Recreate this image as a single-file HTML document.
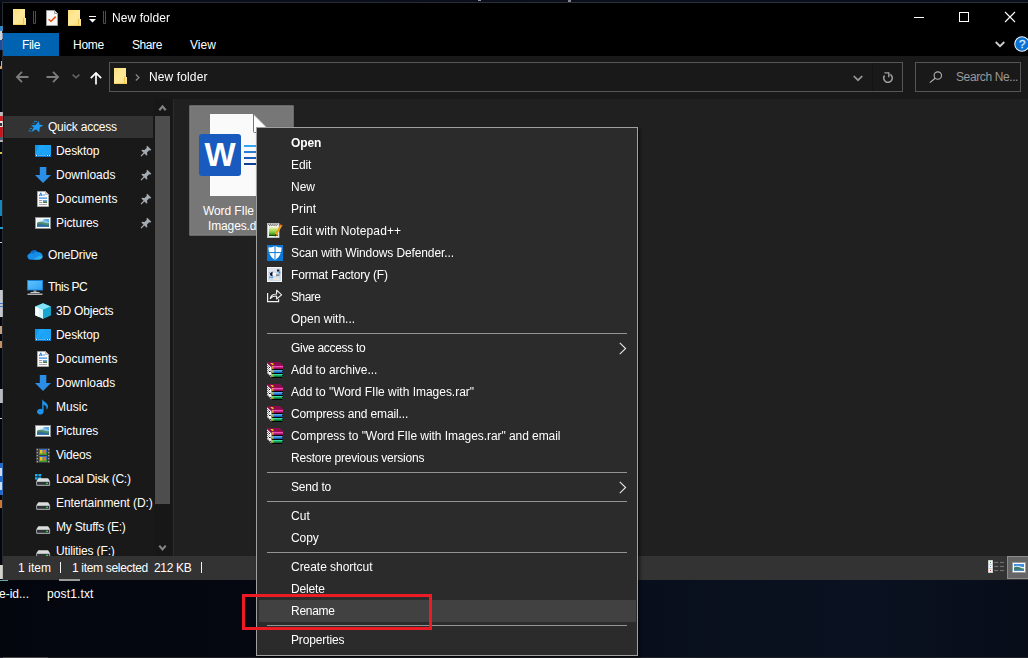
<!DOCTYPE html>
<html><head><meta charset="utf-8"><title>New folder</title>
<style>
*{box-sizing:border-box;margin:0;padding:0}
html,body{width:1028px;height:658px;overflow:hidden;background:#05070f}
body{background:linear-gradient(90deg,#04060e 0%,#050812 30%,#09101e 70%,#0a1221 85%,#070c18 100%)}
body{position:relative;font-family:"Liberation Sans",sans-serif;font-size:12px;color:#fff}
.abs,svg{position:absolute}
svg{overflow:visible}
.t{position:absolute;white-space:nowrap;line-height:16px;height:16px;color:#fff;transform-origin:0 50%}
#win{left:2px;top:2px;width:1026px;height:578px;background:#191919;background-clip:padding-box;border-left:1px solid rgba(120,122,130,.3);border-top:1px solid rgba(120,122,130,.3)}
#title{left:3px;top:3px;width:1025px;height:30px;background:#000}
#ribbon{left:3px;top:33px;width:1025px;height:23px;background:#000}
#filetab{left:3px;top:33px;width:56px;height:23px;background:#0063b1}
#addr{left:109px;top:62px;width:794px;height:30px;border:1px solid #555;background:#191919}
#search{left:915px;top:62px;width:106px;height:30px;border:1px solid #555;background:#191919}
#nav{left:3px;top:99px;width:151px;height:457px;background:#191919}
#track{left:154px;top:99px;width:18px;height:457px;background:#171717}
#thumb{left:155px;top:116px;width:15px;height:388px;background:#4d4d4d}
#split{left:173px;top:99px;width:1px;height:457px;background:#2b2b2b}
#content{left:174px;top:99px;width:854px;height:457px;background:#202020}
#qa{left:4px;top:116px;width:149px;height:22px;background:#333}
#status{left:3px;top:556px;width:1025px;height:24px;background:#333}
#menu{left:256px;top:127px;width:382px;height:529px;background:#2b2b2b;border:1px solid #a0a0a0;box-shadow:2px 2px 3px rgba(0,0,0,.55)}
#hl{left:259px;top:600px;width:377px;height:22px;background:#414141}
#red{left:242px;top:594px;width:190px;height:36px;border:3px solid #ed1c24}
.sep{position:absolute;left:267px;width:360px;height:1px;background:#949494}
.m{left:291px;will-change:transform}
.gs{will-change:transform}
.n{left:56px}
.g{color:#9a9a9a}
</style></head><body>

<!-- DESKTOP BITS -->
<div class="abs" style="left:0;top:26px;width:3px;height:5px;background:#2a88cc"></div>
<div class="abs" style="left:0;top:31px;width:2px;height:9px;background:#ccd2d8"></div>
<div class="abs" style="left:2px;top:33px;width:1px;height:6px;background:#8aa4c4"></div>
<div class="abs" style="left:0;top:40px;width:3px;height:10px;background:#1c4e9c"></div>
<div class="abs" style="left:1px;top:61px;width:1px;height:6px;background:#b8b4b0"></div>
<div class="abs" style="left:0;top:66px;width:2px;height:3px;background:#d8a060"></div>
<div class="abs" style="left:0;top:112px;width:3px;height:4px;background:#bcbcbc"></div>
<div class="abs" style="left:0;top:116px;width:3px;height:5px;background:#d8181c"></div>
<div class="abs" style="left:0;top:121px;width:3px;height:6px;background:#ececec"></div>
<div class="abs" style="left:0;top:123px;width:2px;height:3px;background:#3a3030"></div>
<div class="abs" style="left:0;top:127px;width:3px;height:10px;background:#cc1418"></div>
<div class="abs" style="left:0;top:137px;width:3px;height:3px;background:#4a5a70"></div>
<div class="abs" style="left:0;top:140px;width:3px;height:2px;background:#b4b4b4"></div>
<div class="abs" style="left:0;top:152px;width:2px;height:2px;background:#d8c040"></div>
<div class="abs" style="left:0;top:200px;width:2px;height:16px;background:#1488b8"></div>
<div class="abs" style="left:0;top:227px;width:3px;height:2px;background:#18a0d0"></div>
<div class="abs" style="left:0;top:242px;width:2px;height:1px;background:#ccc"></div>
<div class="abs" style="left:0;top:290px;width:3px;height:27px;background:#c4c8cc"></div>
<div class="abs" style="left:0;top:303px;width:3px;height:1px;background:#3a78d0"></div>
<div class="abs" style="left:0;top:306px;width:3px;height:1px;background:#3a78d0"></div>
<div class="abs" style="left:0;top:326px;width:2px;height:8px;background:#c8a080"></div>
<div class="abs" style="left:0;top:341px;width:2px;height:7px;background:#c89060"></div>
<div class="abs" style="left:0;top:389px;width:3px;height:14px;background:#b8bcc0"></div>
<div class="abs" style="left:0;top:418px;width:2px;height:1px;background:#ccc"></div>
<div class="abs" style="left:0;top:463px;width:3px;height:32px;background:#1c6ad0"></div>
<div class="abs" style="left:0;top:468px;width:2px;height:8px;background:#d0dcec"></div>
<div class="abs" style="left:0;top:482px;width:2px;height:8px;background:#d0dcec"></div>
<div class="abs" style="left:0;top:500px;width:2px;height:8px;background:#c87830"></div>
<div class="abs" style="left:0;top:565px;width:3px;height:14px;background:#d4d4cc"></div>
<div class="abs" style="left:0;top:0;width:1028px;height:2px;background:#0b0f1b"></div>
<div class="abs" style="left:478px;top:0;width:3px;height:1px;background:#999"></div>
<div class="abs" style="left:568px;top:0;width:3px;height:2px;background:#888"></div>
<div class="abs" style="left:0;top:657px;width:1028px;height:1px;background:#1e2026"></div>
<div class="abs" style="left:3px;top:657px;width:45px;height:1px;background:#484848"></div>
<div class="abs" id="win"></div>
<div class="abs" id="title"></div>
<div class="abs" id="ribbon"></div>
<div class="abs" id="filetab"></div>
<div class="abs" id="addr"></div>
<div class="abs" id="search"></div>
<div class="abs" id="nav"></div>
<div class="abs" id="track"></div>
<div class="abs" id="thumb"></div>
<div class="abs" id="split"></div>
<div class="abs" id="content"></div>
<div class="abs" id="qa"></div>
<div class="abs" id="status"></div>

<!-- TITLE TEXT -->
<div class="t gs" style="left:112px;top:10px;letter-spacing:0.08px">New folder</div>
<div class="t" style="left:22px;top:37px;letter-spacing:-0.34px">File</div>
<div class="t" style="left:73px;top:37px;letter-spacing:-0.25px">Home</div>
<div class="t" style="left:132px;top:37px;letter-spacing:-0.41px">Share</div>
<div class="t" style="left:190px;top:37px;letter-spacing:0.05px">View</div>
<div class="t gs" style="left:149px;top:69px;letter-spacing:0.12px">New folder</div>
<div class="t g" style="left:956px;top:69px;letter-spacing:-0.39px">Search Ne...</div>


<!-- TITLE ICONS -->
<svg style="left:13px;top:9px" width="13" height="16" viewBox="0 0 13 16"><defs><linearGradient id="fg" x1="0" y1="0" x2="1" y2="1"><stop offset="0" stop-color="#ffe07a"/><stop offset=".5" stop-color="#ffe999"/><stop offset="1" stop-color="#ffdf7d"/></linearGradient></defs><rect x="0" y="0" width="12" height="16" fill="url(#fg)"/><rect x="10" y="9" width="3" height="7" fill="#ffe38a"/><rect x="10" y="9" width="1" height="7" fill="#e9c558"/><rect x="0" y="15" width="13" height="1" fill="#f2cf5e"/></svg>
<svg style="left:33px;top:11px" width="3" height="13" viewBox="0 0 3 13"><path d="M.5 0V12.5H2.5V0" fill="none" stroke="#4f4f4f" stroke-width="1"/></svg>
<svg style="left:46px;top:10px" width="12" height="16" viewBox="0 0 12 16"><path d="M.5.5H8.5L11.5 3.5V15.5H.5Z" fill="#f7f7f7" stroke="#9d9d9d"/><path d="M8.5.5V3.5H11.5" fill="#e4e4e4" stroke="#9d9d9d"/><path d="M2.6 9.2L5 11.3L9.7 6.6" fill="none" stroke="#f04e12" stroke-width="1.5"/></svg>
<svg style="left:68px;top:10px" width="13" height="16" viewBox="0 0 13 16"><rect x="0" y="0" width="12" height="16" fill="url(#fg)"/><rect x="10" y="9" width="3" height="7" fill="#ffe38a"/><rect x="10" y="9" width="1" height="7" fill="#e9c558"/><rect x="0" y="15" width="13" height="1" fill="#f2cf5e"/></svg>
<svg style="left:89px;top:16px" width="8" height="7" viewBox="0 0 8 7"><rect x="0" y="0" width="7" height="1" fill="#fff"/><path d="M0 3H7L3.5 6.5Z" fill="#fff"/></svg>
<svg style="left:103px;top:11px" width="3" height="13" viewBox="0 0 3 13"><path d="M.5 0V12.5H2.5V0" fill="none" stroke="#4f4f4f" stroke-width="1"/></svg>
<!-- WINDOW CONTROLS -->
<svg style="left:914px;top:12px" width="102" height="11" viewBox="0 0 102 11"><path d="M0 5.5H10" stroke="#fff" stroke-width="1"/><rect x="45.5" y=".5" width="9" height="9" fill="none" stroke="#fff"/><path d="M91 0L101 10M101 0L91 10" stroke="#fff" stroke-width="1.1"/></svg>
<svg style="left:995px;top:41px" width="10" height="7" viewBox="0 0 10 7"><path d="M.7 1L5 5.2L9.3 1" fill="none" stroke="#d0d0d0" stroke-width="1.8"/></svg>
<svg style="left:1014px;top:36px" width="16" height="16" viewBox="0 0 17 17"><circle cx="8.5" cy="8.5" r="7.7" fill="#0a72d4" stroke="#f2f6fb" stroke-width="1.1"/><text x="8.7" y="13.2" font-family="Liberation Sans, sans-serif" font-size="12.5" fill="#d8ebfc" text-anchor="middle" stroke="#d8ebfc" stroke-width=".35">?</text></svg>
<!-- NAV BAR ICONS -->
<svg style="left:16px;top:71px" width="13" height="12" viewBox="0 0 13 12"><path d="M6 .8L.9 6L6 11.2M1 6H12.5" fill="none" stroke="#7c7c7c" stroke-width="1.8"/></svg>
<svg style="left:46px;top:71px" width="13" height="12" viewBox="0 0 13 12"><path d="M7 .8L12.1 6L7 11.2M12 6H.5" fill="none" stroke="#7c7c7c" stroke-width="1.8"/></svg>
<svg style="left:72px;top:74px" width="8" height="5" viewBox="0 0 8 5"><path d="M.6.6L4 3.8L7.4.6" fill="none" stroke="#666" stroke-width="1.5"/></svg>
<svg style="left:90px;top:72px" width="12" height="13" viewBox="0 0 12 13"><path d="M.8 6.2L6 1L11.2 6.2M6 1.2V12.5" fill="none" stroke="#fff" stroke-width="1.7"/></svg>
<svg style="left:114px;top:68px" width="13" height="16" viewBox="0 0 13 16" preserveAspectRatio="none"><rect x="0" y="0" width="12" height="16" fill="url(#fg)"/><rect x="10" y="9" width="3" height="7" fill="#ffe38a"/><rect x="10" y="9" width="1" height="7" fill="#e9c558"/><rect x="0" y="15" width="13" height="1" fill="#f2cf5e"/></svg>
<svg style="left:135px;top:74px" width="5" height="7" viewBox="0 0 5 7"><path d="M.8.5L4 3.5L.8 6.5" fill="none" stroke="#8a8a8a" stroke-width="1.2"/></svg>
<svg style="left:853px;top:75px" width="10" height="7" viewBox="0 0 10 7"><path d="M.7 1L5 5.2L9.3 1" fill="none" stroke="#989898" stroke-width="1.7"/></svg>
<div class="abs" style="left:872px;top:63px;width:1px;height:28px;background:#131313"></div>
<svg style="left:882px;top:71px" width="12" height="13" viewBox="0 0 12 13"><path d="M8.3 3.4A4.3 4.3 0 1 1 2.5 4.5" fill="none" stroke="#a2a2a2" stroke-width="1.5"/><path d="M2.4 1.9H6.8V6.2" fill="none" stroke="#a2a2a2" stroke-width="1.4"/></svg>
<svg style="left:929px;top:71px" width="14" height="12" viewBox="0 0 14 12"><circle cx="8.8" cy="4.6" r="3.7" fill="none" stroke="#b0b0b0" stroke-width="1.1"/><path d="M6.2 7.3L.8 11.6" stroke="#b0b0b0" stroke-width="1.2"/></svg>


<!-- NAV ICONS -->
<svg style="left:28px;top:120px" width="16" height="13" viewBox="0 0 16 13"><path d="M11 .9L11.2 4.6L15.2 5.3L11.8 7.6L11.2 12.2L8 9.3L3.2 12.3L5.7 7.5L3 5.6L7.6 5Z" fill="#1f9cf2"/><path d="M6 1.4H9M1.6 8.4H4.2M.4 10.8H3" stroke="#1f9cf2" stroke-width="1" opacity=".8"/><path d="M4.2 3.3H7" stroke="#1f9cf2" stroke-width=".8" opacity=".6"/></svg>
<svg style="left:35px;top:145px" width="16" height="12" viewBox="0 0 16 12"><defs><linearGradient id="dg145" x1="0" y1="0" x2="1" y2="0"><stop offset="0" stop-color="#0d96f0"/><stop offset=".55" stop-color="#1aa6f8"/><stop offset="1" stop-color="#1ea0f4"/></linearGradient></defs><rect width="16" height="12" fill="url(#dg145)"/><path d="M5 0H9L4 10H0V9Z" fill="#3ab4fb" opacity=".35"/><rect y="10" width="16" height="2" fill="#0a78d2"/><rect x="1" y="10" width="1" height="1" fill="#fff"/><rect x="3" y="10.3" width="8" height=".7" fill="#7cc4f5"/><rect x="12" y="10" width="1" height="1" fill="#fff"/><rect x="14" y="10" width="1" height="1" fill="#fff"/></svg><svg style="left:35px;top:167px" width="16" height="16" viewBox="0 0 16 16"><path d="M4.8 0H11.3V8H16L8 15.9L0 8H4.8Z" fill="#2b8fe7"/></svg><svg style="left:37px;top:191px" width="12" height="16" viewBox="0 0 12 16"><path d="M.5.5H8.5L11.5 3.5V15.5H.5Z" fill="#fbfbfb" stroke="#a8a8a8"/><path d="M8.5.5V3.5H11.5Z" fill="#e6e6e6" stroke="#a8a8a8" stroke-width=".8"/><path d="M2.3 5L3.8 1.8L5 5M2.8 4H4.6" stroke="#2b7fd6" stroke-width="1" fill="none"/><rect x="5.5" y="3.5" width="2.5" height="1" fill="#5aa0e6"/><rect x="2" y="6.5" width="8" height="1.2" fill="#2b86de"/><rect x="2" y="9" width="3.2" height="1" fill="#9a9a9a"/><rect x="2" y="11" width="3.2" height="1" fill="#9a9a9a"/><rect x="2" y="13" width="8" height="1" fill="#a8a8a8"/><rect x="6" y="9" width="4" height="1.3" fill="#6aa6e8"/><rect x="6" y="10.3" width="4" height="1.7" fill="#3f7a4a"/></svg><svg style="left:35px;top:217px" width="16" height="12" viewBox="0 0 16 12"><rect x=".5" y=".5" width="15" height="11" fill="#fdfdfd" stroke="#8e8e8e"/><rect x="2" y="2" width="12" height="8" fill="#8cc4ec"/><path d="M2 2H9L7 4.5L2 5.5Z" fill="#e8f2f8"/><path d="M9 2H14V5L11 4Z" fill="#5aa9e6"/><path d="M2 6Q5 3.8 8 5.2T14 6.3V8.5H2Z" fill="#4f8f6a"/><path d="M2 7.2Q6 6.2 9 7.4T14 7.6V10H2Z" fill="#2d6f95"/><rect x="2" y="9" width="12" height="1" fill="#3b78b0"/></svg><svg style="left:140px;top:145px" width="12" height="12" viewBox="0 0 12 12"><path d="M7.3.8L11.3 4.7L10.2 5.7L9.3 5.3L7 7.6L7.3 10.2L6.4 10.4L1.6 5.7L1.8 4.8L4.5 5L6.8 2.7L6.4 1.7Z" fill="#a3abb1"/><path d="M4.2 7.9L1 11.1" stroke="#a3abb1" stroke-width="1.3"/></svg><svg style="left:140px;top:169px" width="12" height="12" viewBox="0 0 12 12"><path d="M7.3.8L11.3 4.7L10.2 5.7L9.3 5.3L7 7.6L7.3 10.2L6.4 10.4L1.6 5.7L1.8 4.8L4.5 5L6.8 2.7L6.4 1.7Z" fill="#a3abb1"/><path d="M4.2 7.9L1 11.1" stroke="#a3abb1" stroke-width="1.3"/></svg><svg style="left:140px;top:193px" width="12" height="12" viewBox="0 0 12 12"><path d="M7.3.8L11.3 4.7L10.2 5.7L9.3 5.3L7 7.6L7.3 10.2L6.4 10.4L1.6 5.7L1.8 4.8L4.5 5L6.8 2.7L6.4 1.7Z" fill="#a3abb1"/><path d="M4.2 7.9L1 11.1" stroke="#a3abb1" stroke-width="1.3"/></svg><svg style="left:140px;top:217px" width="12" height="12" viewBox="0 0 12 12"><path d="M7.3.8L11.3 4.7L10.2 5.7L9.3 5.3L7 7.6L7.3 10.2L6.4 10.4L1.6 5.7L1.8 4.8L4.5 5L6.8 2.7L6.4 1.7Z" fill="#a3abb1"/><path d="M4.2 7.9L1 11.1" stroke="#a3abb1" stroke-width="1.3"/></svg>
<svg style="left:27px;top:249px" width="16" height="11" viewBox="0 0 16 11"><path d="M3.4 10.6A3.1 3.1 0 0 1 2.9 4.5A4.3 4.3 0 0 1 10.8 3.2A3.9 3.9 0 0 1 12.6 10.6Z" fill="#0e6fce"/><path d="M3.4 10.6A3.1 3.1 0 0 1 2.9 4.5Q5 4 6.5 5.3L12.9 10.5Z" fill="#1a8ee6"/><path d="M6.3 5.2A3.4 3.4 0 0 1 10.9 3.3A3.9 3.9 0 0 1 15.6 7L9.5 8Z" fill="#1490e8"/><path d="M3.4 10.6H12.6A3 3 0 0 0 15.6 7Q14 6 12.3 6.8L6 10.6Z" fill="#2cb0f2"/></svg>
<svg style="left:27px;top:280px" width="16" height="15" viewBox="0 0 16 15"><defs><linearGradient id="pcg" x1="0" y1="0" x2="1" y2="1"><stop offset="0" stop-color="#62c3ff"/><stop offset="1" stop-color="#2ea3f5"/></linearGradient></defs><rect x=".5" y=".5" width="15" height="9.5" fill="url(#pcg)" stroke="#1a7fd0"/><rect x="6.5" y="10.5" width="3" height="1.5" fill="#9aa0a6"/><rect x="3.5" y="12" width="9" height="1" fill="#c8ccd0"/><rect x=".5" y="13.6" width="15" height="1.2" fill="#d8dadc"/></svg>
<svg style="left:35px;top:303px" width="16" height="16" viewBox="0 0 16 16"><path d="M8 .3L15.7 3.5V12.2L8 15.7L.3 12.2V3.5Z" fill="#35c6e8"/><path d="M8 .3L15.7 3.5L8 6.8L.3 3.5Z" fill="#7fe3f5"/><path d="M.3 3.5L8 6.8V15.7L.3 12.2Z" fill="#d8f6fb"/><path d="M8 6.8L15.7 3.5V12.2L8 15.7Z" fill="#17a6cf"/><path d="M.3 3.5L4 5.1V13.9L.3 12.2Z" fill="#f4fdff"/></svg>
<svg style="left:35px;top:329px" width="16" height="12" viewBox="0 0 16 12"><defs><linearGradient id="dg329" x1="0" y1="0" x2="1" y2="0"><stop offset="0" stop-color="#0d96f0"/><stop offset=".55" stop-color="#1aa6f8"/><stop offset="1" stop-color="#1ea0f4"/></linearGradient></defs><rect width="16" height="12" fill="url(#dg329)"/><path d="M5 0H9L4 10H0V9Z" fill="#3ab4fb" opacity=".35"/><rect y="10" width="16" height="2" fill="#0a78d2"/><rect x="1" y="10" width="1" height="1" fill="#fff"/><rect x="3" y="10.3" width="8" height=".7" fill="#7cc4f5"/><rect x="12" y="10" width="1" height="1" fill="#fff"/><rect x="14" y="10" width="1" height="1" fill="#fff"/></svg><svg style="left:37px;top:351px" width="12" height="16" viewBox="0 0 12 16"><path d="M.5.5H8.5L11.5 3.5V15.5H.5Z" fill="#fbfbfb" stroke="#a8a8a8"/><path d="M8.5.5V3.5H11.5Z" fill="#e6e6e6" stroke="#a8a8a8" stroke-width=".8"/><path d="M2.3 5L3.8 1.8L5 5M2.8 4H4.6" stroke="#2b7fd6" stroke-width="1" fill="none"/><rect x="5.5" y="3.5" width="2.5" height="1" fill="#5aa0e6"/><rect x="2" y="6.5" width="8" height="1.2" fill="#2b86de"/><rect x="2" y="9" width="3.2" height="1" fill="#9a9a9a"/><rect x="2" y="11" width="3.2" height="1" fill="#9a9a9a"/><rect x="2" y="13" width="8" height="1" fill="#a8a8a8"/><rect x="6" y="9" width="4" height="1.3" fill="#6aa6e8"/><rect x="6" y="10.3" width="4" height="1.7" fill="#3f7a4a"/></svg><svg style="left:35px;top:375px" width="16" height="16" viewBox="0 0 16 16"><path d="M4.8 0H11.3V8H16L8 15.9L0 8H4.8Z" fill="#2b8fe7"/></svg>
<svg style="left:37px;top:399px" width="12" height="16" viewBox="0 0 12 16"><path d="M5.2.2C6 2.5 10.8 3.3 11 7.4C11 9 10.2 10 9.3 10.6C10 8.6 9 6.6 6.6 5.8V12.7A3.3 2.9 0 1 1 5.2 10.3Z" fill="#1d92ea"/></svg>
<svg style="left:35px;top:425px" width="16" height="12" viewBox="0 0 16 12"><rect x=".5" y=".5" width="15" height="11" fill="#fdfdfd" stroke="#8e8e8e"/><rect x="2" y="2" width="12" height="8" fill="#8cc4ec"/><path d="M2 2H9L7 4.5L2 5.5Z" fill="#e8f2f8"/><path d="M9 2H14V5L11 4Z" fill="#5aa9e6"/><path d="M2 6Q5 3.8 8 5.2T14 6.3V8.5H2Z" fill="#4f8f6a"/><path d="M2 7.2Q6 6.2 9 7.4T14 7.6V10H2Z" fill="#2d6f95"/><rect x="2" y="9" width="12" height="1" fill="#3b78b0"/></svg>
<svg style="left:36px;top:448px" width="14" height="15" viewBox="0 0 14 15"><rect width="14" height="15" fill="#3a3a3a"/><g fill="#a8a8a8"><rect x=".7" y="1" width="1.3" height="1.3"/><rect x=".7" y="4" width="1.3" height="1.3"/><rect x=".7" y="7" width="1.3" height="1.3"/><rect x=".7" y="10" width="1.3" height="1.3"/><rect x=".7" y="13" width="1.3" height="1.3"/><rect x="12" y="1" width="1.3" height="1.3"/><rect x="12" y="4" width="1.3" height="1.3"/><rect x="12" y="7" width="1.3" height="1.3"/><rect x="12" y="10" width="1.3" height="1.3"/><rect x="12" y="13" width="1.3" height="1.3"/></g><rect x="3" y="1" width="8" height="6" fill="#2f6fd0"/><rect x="3" y="4.5" width="8" height="2.5" fill="#3f9a3a"/><rect x="4" y="2" width="2.5" height="3.5" fill="#f0c020"/><rect x="7.3" y="2" width="2.5" height="3.5" fill="#e87820"/><rect x="3" y="8" width="8" height="6" fill="#2f6fd0"/><rect x="3" y="11.5" width="8" height="2.5" fill="#3f9a3a"/><rect x="4" y="9" width="2.5" height="3.5" fill="#f0c020"/><rect x="7.3" y="9" width="2.5" height="3.5" fill="#e87820"/></svg>
<svg style="left:35px;top:473.5px" width="7" height="6" viewBox="0 0 7 6"><g fill="#16b0f6"><rect x="0" y="0" width="2.6" height="2.4"/><rect x="3.4" y="0" width="2.8" height="2.4"/><rect x="0" y="3.2" width="2.6" height="2.4"/><rect x="3.4" y="3.2" width="2.8" height="2.4"/></g></svg>
<svg style="left:36px;top:478px" width="14.4" height="8" viewBox="0 0 16 9" preserveAspectRatio="none"><path d="M2.6.3H13.4L15.6 3.6H.4Z" fill="#dcdcdc"/><rect x=".3" y="3.4" width="15.4" height="5.3" rx=".8" fill="#c4c7ca"/><rect x="1.2" y="4.4" width="13.6" height="3.3" fill="#303336"/><rect x="11.4" y="5.3" width="1.8" height="1.5" fill="#3cf04c"/></svg><svg style="left:36px;top:502px" width="14.4" height="8" viewBox="0 0 16 9" preserveAspectRatio="none"><path d="M2.6.3H13.4L15.6 3.6H.4Z" fill="#dcdcdc"/><rect x=".3" y="3.4" width="15.4" height="5.3" rx=".8" fill="#c4c7ca"/><rect x="1.2" y="4.4" width="13.6" height="3.3" fill="#303336"/><rect x="11.4" y="5.3" width="1.8" height="1.5" fill="#3cf04c"/></svg><svg style="left:36px;top:526px" width="14.4" height="8" viewBox="0 0 16 9" preserveAspectRatio="none"><path d="M2.6.3H13.4L15.6 3.6H.4Z" fill="#dcdcdc"/><rect x=".3" y="3.4" width="15.4" height="5.3" rx=".8" fill="#c4c7ca"/><rect x="1.2" y="4.4" width="13.6" height="3.3" fill="#303336"/><rect x="11.4" y="5.3" width="1.8" height="1.5" fill="#3cf04c"/></svg><div class="abs" style="left:35px;top:549px;width:16px;height:7px;overflow:hidden"><svg style="left:1px;top:1px" width="14.4" height="8" viewBox="0 0 16 9" preserveAspectRatio="none"><path d="M2.6.3H13.4L15.6 3.6H.4Z" fill="#dcdcdc"/><rect x=".3" y="3.4" width="15.4" height="5.3" rx=".8" fill="#c4c7ca"/><rect x="1.2" y="4.4" width="13.6" height="3.3" fill="#303336"/><rect x="11.4" y="5.3" width="1.8" height="1.5" fill="#3cf04c"/></svg></div>
<svg style="left:158px;top:104px" width="9" height="7" viewBox="0 0 9 7"><path d="M1.3 6.2L4.5 2.4L7.7 6.2" fill="none" stroke="#858585" stroke-width="2.1"/></svg>
<svg style="left:158px;top:545px" width="9" height="7" viewBox="0 0 9 7"><path d="M1.3.6L4.5 4.4L7.7.6" fill="none" stroke="#858585" stroke-width="2.1"/></svg>

<!-- NAV TEXT -->
<div class="t" style="left:48px;top:119px;letter-spacing:-0.21px">Quick access</div>
<div class="t n" style="top:143px;letter-spacing:-0.08px">Desktop</div>
<div class="t n" style="top:167px;letter-spacing:0.01px">Downloads</div>
<div class="t n" style="top:191px;letter-spacing:0.09px">Documents</div>
<div class="t n" style="top:215px;letter-spacing:-0.11px">Pictures</div>
<div class="t" style="left:48px;top:247px;letter-spacing:-0.14px">OneDrive</div>
<div class="t" style="left:48px;top:279px;letter-spacing:-0.50px">This PC</div>
<div class="t n" style="top:303px;letter-spacing:-0.20px">3D Objects</div>
<div class="t n" style="top:327px;letter-spacing:-0.10px">Desktop</div>
<div class="t n" style="top:351px;letter-spacing:0.09px">Documents</div>
<div class="t n" style="top:375px;letter-spacing:-0.01px">Downloads</div>
<div class="t n" style="top:399px;letter-spacing:0.05px">Music</div>
<div class="t n" style="top:423px;letter-spacing:-0.16px">Pictures</div>
<div class="t n" style="top:447px;letter-spacing:-0.20px">Videos</div>
<div class="t n" style="top:471px;letter-spacing:-0.27px">Local Disk (C:)</div>
<div class="t n" style="top:495px;letter-spacing:-0.07px">Entertainment (D:)</div>
<div class="t n" style="top:519px;letter-spacing:-0.20px">My Stuffs (E:)</div>
<div class="abs" style="left:4px;top:540px;width:150px;height:16px;overflow:hidden"><div class="t" style="left:52px;top:3px;letter-spacing:-0.14px">Utilities (F:)</div></div>

<div class="abs" style="left:0;top:580px;width:8px;height:1px;background:#6aa8a8"></div>
<div class="abs" style="left:59px;top:579px;width:21px;height:2px;background:#9c9c9c"></div>
<!-- STATUS TEXT -->
<div class="t" style="left:18px;top:560px;letter-spacing:0.07px">1 item</div>
<div class="abs" style="left:60px;top:562px;width:1px;height:11px;background:#f4f4f4"></div>
<div class="t" style="left:72px;top:560px;letter-spacing:-0.32px">1 item selected&nbsp; 212 KB</div>
<div class="abs" style="left:201px;top:562px;width:1px;height:11px;background:#f4f4f4"></div>


<!-- VIEW BUTTONS -->
<svg style="left:988px;top:560px" width="17" height="13" viewBox="0 0 17 13"><rect x="0" y="0" width="5" height="13" rx=".6" fill="#c9c9c9"/><rect x=".8" y=".8" width="3.4" height="3.2" fill="#fafafa"/><rect x=".8" y="4.8" width="3.4" height="3.2" fill="#fafafa"/><rect x=".8" y="8.8" width="3.4" height="3.2" fill="#fafafa"/><rect x="2" y="1.9" width="1" height="1" fill="#2f7a4a"/><rect x="2" y="5.9" width="1" height="1" fill="#3a78e0"/><rect x="2" y="9.9" width="1" height="1" fill="#d02020"/><g fill="#6e6e6e"><rect x="6.2" y="1.9" width="4" height="1.2"/><rect x="12" y="1.9" width="4" height="1.2"/><rect x="6.2" y="5.9" width="4" height="1.2"/><rect x="12" y="5.9" width="4" height="1.2"/><rect x="6.2" y="9.9" width="4" height="1.2"/><rect x="12" y="9.9" width="4" height="1.2"/></g></svg>
<div class="abs" style="left:1007px;top:556px;width:22px;height:23px;background:#666;border:1px solid #8c8c8c"></div>
<svg style="left:1012px;top:562px" width="14" height="11" viewBox="0 0 14 11"><rect x=".5" y=".5" width="13" height="10" fill="#fcfcfc" stroke="#9a9a9a"/><rect x="2" y="2" width="10" height="7" fill="#3f8fe0"/><path d="M2 4.5Q5 3 8 4.2T12 5V7H2Z" fill="#e8f0f4"/><path d="M2 5.5Q5 4.2 8 5.6T12 6.2V9H2Z" fill="#3c7c62"/><rect x="2" y="7.6" width="10" height="1.4" fill="#4a86b8"/></svg>
<!-- DESKTOP TEXT -->
<div class="t" style="left:-1px;top:586px">e-id...</div>
<div class="t" style="left:47px;top:586px;letter-spacing:0.13px">post1.txt</div>

<!-- FILE ITEM -->
<div class="abs" id="sel" style="left:189px;top:105px;width:104px;height:130px;background:#777;border:1px solid #828282;transform:translate(.5px,.5px)"></div>
<svg style="left:210px;top:114px" width="63" height="82" viewBox="0 0 63 82"><path d="M0 0H43.5L62 18.5V82H0Z" fill="#fafafa"/><path d="M43.5 0V17.5Q43.5 18.5 44.5 18.5H62Z" fill="#fdfdfd" stroke="#767676" stroke-width="1"/><rect x="34" y="31" width="24" height="2" fill="#34a5f0"/><rect x="34" y="37" width="24" height="2" fill="#2b7cd3"/><rect x="34" y="43" width="24" height="2" fill="#185abd"/><rect x="34" y="49" width="24" height="2" fill="#103f91"/></svg>
<div class="abs" style="left:199px;top:134px;width:42px;height:42px;background:#185abd;border-radius:3px"></div>
<div class="abs" style="left:199px;top:134px;width:42px;height:42px;line-height:42px;text-align:center;font-weight:bold;font-size:33px;color:#fff;letter-spacing:0">W</div>
<div class="t" style="left:203px;top:203px;letter-spacing:-0.10px">Word FIle with</div>
<div class="t" style="left:208px;top:218px;letter-spacing:-0.13px">Images.docx</div>

<!-- MENU -->
<div class="abs" id="menu"></div>
<div class="abs" id="hl"></div>
<div class="t m" style="top:135px;font-weight:bold;letter-spacing:-0.09px">Open</div>
<div class="t m" style="top:157px;letter-spacing:-0.12px">Edit</div>
<div class="t m" style="top:179px;letter-spacing:-0.01px">New</div>
<div class="t m" style="top:201px;letter-spacing:0.10px">Print</div>
<div class="t m" style="top:223px;letter-spacing:0.11px">Edit with Notepad++</div>
<div class="t m" style="top:245px;letter-spacing:-0.11px">Scan with Windows Defender...</div>
<div class="t m" style="top:267px;letter-spacing:-0.18px">Format Factory (F)</div>
<div class="t m" style="top:289px;letter-spacing:-0.51px">Share</div>
<div class="t m" style="top:311px;letter-spacing:0.01px">Open with...</div>
<div class="sep" style="top:333px"></div>
<div class="t m" style="top:340px;letter-spacing:-0.31px">Give access to</div>
<div class="t m" style="top:362px;letter-spacing:-0.02px">Add to archive...</div>
<div class="t m" style="top:384px;letter-spacing:-0.02px">Add to "Word FIle with Images.rar"</div>
<div class="t m" style="top:406px;letter-spacing:-0.14px">Compress and email...</div>
<div class="t m" style="top:428px;letter-spacing:-0.06px">Compress to "Word FIle with Images.rar" and email</div>
<div class="t m" style="top:450px;letter-spacing:-0.22px">Restore previous versions</div>
<div class="sep" style="top:472px"></div>
<div class="t m" style="top:479px;letter-spacing:-0.18px">Send to</div>
<div class="sep" style="top:501px"></div>
<div class="t m" style="top:508px;letter-spacing:0.14px">Cut</div>
<div class="t m" style="top:530px;letter-spacing:-0.05px">Copy</div>
<div class="sep" style="top:552px"></div>
<div class="t m" style="top:559px;letter-spacing:-0.04px">Create shortcut</div>
<div class="t m" style="top:581px;letter-spacing:-0.15px">Delete</div>
<div class="t m" style="top:603px;letter-spacing:-0.29px">Rename</div>
<div class="sep" style="top:625px"></div>
<div class="t m" style="top:632px;letter-spacing:-0.13px">Properties</div>
<svg width="0" height="0" style="left:0;top:0"><defs>
<linearGradient id="rm" x1="0" y1="0" x2="0" y2="1"><stop offset="0" stop-color="#c21a84"/><stop offset=".3" stop-color="#ff6ac8"/><stop offset=".55" stop-color="#b0106e"/><stop offset="1" stop-color="#7a0a40"/></linearGradient>
<linearGradient id="rb" x1="0" y1="0" x2="0" y2="1"><stop offset="0" stop-color="#7cc6ff"/><stop offset=".35" stop-color="#3c9af0"/><stop offset="1" stop-color="#0a3f9a"/></linearGradient>
<linearGradient id="rg" x1="0" y1="0" x2="0" y2="1"><stop offset="0" stop-color="#5af0b8"/><stop offset=".35" stop-color="#18c080"/><stop offset="1" stop-color="#0a5a1a"/></linearGradient>
<linearGradient id="npg" x1="0" y1="0" x2="0" y2="1"><stop offset="0" stop-color="#eef4b0"/><stop offset=".55" stop-color="#8ed040"/><stop offset="1" stop-color="#0a7a10"/></linearGradient>
</defs></svg>
<svg style="left:267px;top:223px" width="16" height="15" viewBox="0 0 16 15"><rect x=".4" y=".4" width="11.6" height="14.2" fill="#f4f4f4" stroke="#c8c8c8" stroke-width=".8"/><path d="M1.2 1.3H11M2 2.4H10" stroke="#555" stroke-width="1" stroke-dasharray="1 .8"/><rect x="2" y="4.2" width="8.6" height="8.6" fill="url(#npg)"/><rect x="2" y="12" width="8.6" height="1" fill="#064c0a"/><path d="M14.6 1.6L8.4 12.2" stroke="#f0a018" stroke-width="2.2"/><path d="M13.7 1.1L14.9 1.8" stroke="#b01010" stroke-width="2"/><path d="M8.9 11.3L7.9 13.2" stroke="#3a2a10" stroke-width="1.2"/></svg>
<svg style="left:267px;top:245px" width="16" height="16" viewBox="0 0 16 16"><rect width="16" height="16" fill="#0b78d8"/><path d="M1.4 2.6Q5 2.5 8 1Q11 2.5 14.6 2.6Q14.8 11 8 15.2Q1.2 11 1.4 2.6Z" fill="#fff"/><path d="M8 1V15.3M1.2 7.6H14.8" stroke="#0b78d8" stroke-width="1"/></svg>
<svg style="left:267px;top:267px" width="15" height="15" viewBox="0 0 15 15"><rect x=".5" y=".5" width="14" height="14" fill="#cfdbe6" stroke="#f6f6f6"/><rect x="1.5" y="1.5" width="12" height="3" fill="#e0e6ec"/><path d="M3 6.5L5.5 4.5V9.5L3 8Z" fill="#0a0f2a"/><circle cx="7.4" cy="7.2" r="1.7" fill="#fbfbfb"/><rect x="10" y="2.5" width="2.4" height="2" fill="#10142a"/><rect x="11.5" y="4.5" width="1.8" height="2" fill="#3a8ad8"/><rect x="2" y="9.5" width="4" height="1.6" fill="#6aa8e0"/><rect x="9" y="7.5" width="3.5" height="1.2" fill="#5a6a80"/><rect x="6.5" y="10.5" width="6" height="2.5" fill="#e8e8e4"/><rect x="2" y="5" width="1.2" height="1.2" fill="#7ab4ea"/></svg>
<svg style="left:267px;top:289px" width="16" height="14" viewBox="0 0 16 14"><path d="M.6 4V12.6H11.6V10.2" fill="none" stroke="#f2f2f2" stroke-width="1.2"/><path d="M3.2 9.6Q4 5.2 9.6 5V1.2L14.6 5.8L9.6 10V7Q5.4 6.9 3.2 9.6Z" fill="none" stroke="#f2f2f2" stroke-width="1.1" stroke-linejoin="round"/></svg>
<svg style="left:267px;top:362px" width="16" height="16" viewBox="0 0 16 16"><path d="M0 0H13L16.3 3.5V7H4.5L0 1.5Z" fill="#8c0b4c"/><path d="M3.2 1.2L5.2.9L7.2 2.3L5.4 3.1Z" fill="#e6e010"/><rect x="4.6" y="3.8" width="11.4" height="3.4" fill="url(#rm)"/><rect x="4.6" y="7.2" width="11.4" height=".9" fill="#000"/><rect x="4.3" y="8.1" width="11.7" height="3" fill="url(#rb)"/><rect x="4.6" y="11.1" width="11.4" height=".9" fill="#000"/><rect x="4.3" y="12" width="11.7" height="3" fill="url(#rg)"/><rect x="4.6" y="15" width="10.6" height="1" fill="#000"/><path d="M0 1.2L4.5 5.4V15.6L0 11.2Z" fill="#fff"/><path d="M0 3.2L1 4.2M0 5.2L1 6.2M0 7.2L1 8.2M0 9.2L1 10.2M1.6 4.6L3 6M1.6 8.6L3 10M1.6 6.6L2.4 7.4M3.2 9L4.3 10.1M3.2 13L4.3 14.1M.4 11L1.6 12.2M2 12.6L3 13.6" stroke="#000" stroke-width=".9"/><rect x="5.4" y="4.2" width="1" height="3" fill="#e8d21a"/><rect x="5.4" y="8.4" width="1" height="2.7" fill="#e8d21a"/><rect x="5.4" y="12.3" width="1" height="2.7" fill="#e8d21a"/><rect x="15.2" y="8.6" width=".9" height="1.6" fill="#000"/><rect x="15.2" y="12.6" width=".9" height="1.6" fill="#000"/></svg><svg style="left:267px;top:384px" width="16" height="16" viewBox="0 0 16 16"><path d="M0 0H13L16.3 3.5V7H4.5L0 1.5Z" fill="#8c0b4c"/><path d="M3.2 1.2L5.2.9L7.2 2.3L5.4 3.1Z" fill="#e6e010"/><rect x="4.6" y="3.8" width="11.4" height="3.4" fill="url(#rm)"/><rect x="4.6" y="7.2" width="11.4" height=".9" fill="#000"/><rect x="4.3" y="8.1" width="11.7" height="3" fill="url(#rb)"/><rect x="4.6" y="11.1" width="11.4" height=".9" fill="#000"/><rect x="4.3" y="12" width="11.7" height="3" fill="url(#rg)"/><rect x="4.6" y="15" width="10.6" height="1" fill="#000"/><path d="M0 1.2L4.5 5.4V15.6L0 11.2Z" fill="#fff"/><path d="M0 3.2L1 4.2M0 5.2L1 6.2M0 7.2L1 8.2M0 9.2L1 10.2M1.6 4.6L3 6M1.6 8.6L3 10M1.6 6.6L2.4 7.4M3.2 9L4.3 10.1M3.2 13L4.3 14.1M.4 11L1.6 12.2M2 12.6L3 13.6" stroke="#000" stroke-width=".9"/><rect x="5.4" y="4.2" width="1" height="3" fill="#e8d21a"/><rect x="5.4" y="8.4" width="1" height="2.7" fill="#e8d21a"/><rect x="5.4" y="12.3" width="1" height="2.7" fill="#e8d21a"/><rect x="15.2" y="8.6" width=".9" height="1.6" fill="#000"/><rect x="15.2" y="12.6" width=".9" height="1.6" fill="#000"/></svg><svg style="left:267px;top:406px" width="16" height="16" viewBox="0 0 16 16"><path d="M0 0H13L16.3 3.5V7H4.5L0 1.5Z" fill="#8c0b4c"/><path d="M3.2 1.2L5.2.9L7.2 2.3L5.4 3.1Z" fill="#e6e010"/><rect x="4.6" y="3.8" width="11.4" height="3.4" fill="url(#rm)"/><rect x="4.6" y="7.2" width="11.4" height=".9" fill="#000"/><rect x="4.3" y="8.1" width="11.7" height="3" fill="url(#rb)"/><rect x="4.6" y="11.1" width="11.4" height=".9" fill="#000"/><rect x="4.3" y="12" width="11.7" height="3" fill="url(#rg)"/><rect x="4.6" y="15" width="10.6" height="1" fill="#000"/><path d="M0 1.2L4.5 5.4V15.6L0 11.2Z" fill="#fff"/><path d="M0 3.2L1 4.2M0 5.2L1 6.2M0 7.2L1 8.2M0 9.2L1 10.2M1.6 4.6L3 6M1.6 8.6L3 10M1.6 6.6L2.4 7.4M3.2 9L4.3 10.1M3.2 13L4.3 14.1M.4 11L1.6 12.2M2 12.6L3 13.6" stroke="#000" stroke-width=".9"/><rect x="5.4" y="4.2" width="1" height="3" fill="#e8d21a"/><rect x="5.4" y="8.4" width="1" height="2.7" fill="#e8d21a"/><rect x="5.4" y="12.3" width="1" height="2.7" fill="#e8d21a"/><rect x="15.2" y="8.6" width=".9" height="1.6" fill="#000"/><rect x="15.2" y="12.6" width=".9" height="1.6" fill="#000"/></svg><svg style="left:267px;top:428px" width="16" height="16" viewBox="0 0 16 16"><path d="M0 0H13L16.3 3.5V7H4.5L0 1.5Z" fill="#8c0b4c"/><path d="M3.2 1.2L5.2.9L7.2 2.3L5.4 3.1Z" fill="#e6e010"/><rect x="4.6" y="3.8" width="11.4" height="3.4" fill="url(#rm)"/><rect x="4.6" y="7.2" width="11.4" height=".9" fill="#000"/><rect x="4.3" y="8.1" width="11.7" height="3" fill="url(#rb)"/><rect x="4.6" y="11.1" width="11.4" height=".9" fill="#000"/><rect x="4.3" y="12" width="11.7" height="3" fill="url(#rg)"/><rect x="4.6" y="15" width="10.6" height="1" fill="#000"/><path d="M0 1.2L4.5 5.4V15.6L0 11.2Z" fill="#fff"/><path d="M0 3.2L1 4.2M0 5.2L1 6.2M0 7.2L1 8.2M0 9.2L1 10.2M1.6 4.6L3 6M1.6 8.6L3 10M1.6 6.6L2.4 7.4M3.2 9L4.3 10.1M3.2 13L4.3 14.1M.4 11L1.6 12.2M2 12.6L3 13.6" stroke="#000" stroke-width=".9"/><rect x="5.4" y="4.2" width="1" height="3" fill="#e8d21a"/><rect x="5.4" y="8.4" width="1" height="2.7" fill="#e8d21a"/><rect x="5.4" y="12.3" width="1" height="2.7" fill="#e8d21a"/><rect x="15.2" y="8.6" width=".9" height="1.6" fill="#000"/><rect x="15.2" y="12.6" width=".9" height="1.6" fill="#000"/></svg>
<svg style="left:619px;top:342px" width="8" height="13" viewBox="0 0 8 13"><path d="M.8.8L6.6 6.5L.8 12.2" fill="none" stroke="#e8e8e8" stroke-width="1.1"/></svg>
<svg style="left:619px;top:481px" width="8" height="13" viewBox="0 0 8 13"><path d="M.8.8L6.6 6.5L.8 12.2" fill="none" stroke="#e8e8e8" stroke-width="1.1"/></svg>
<div class="abs" id="red"></div>
</body></html>
